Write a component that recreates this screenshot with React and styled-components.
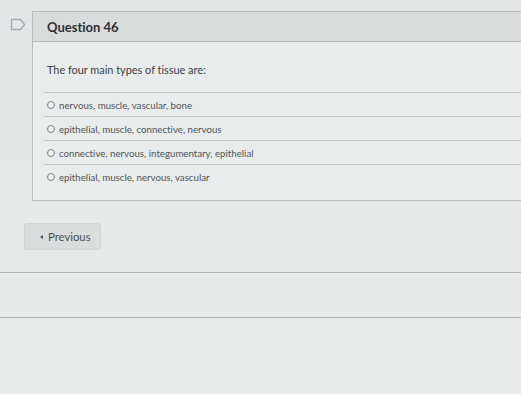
import React from 'react';
import styled, { createGlobalStyle } from 'styled-components';

const answers = [
    'nervous, muscle, vascular, bone',
    'epithelial, muscle, connective, nervous',
    'connective, nervous, integumentary, epithelial',
    'epithelial, muscle, nervous, vascular'
];

export default function App () {

    return (
        <Page>
            <GlobalStyle />
            <QuestionRow>
                <FlagCell>
                    <svg width="16" height="13" viewBox="0 0 16 13">
                        <path d="M1.5 1.5 H10.5 L14.5 6.5 L10.5 11.5 H1.5 Z" fill="none" stroke="#a4a7b6" strokeWidth="1.3" strokeLinejoin="round" />
                    </svg>
                </FlagCell>
                <Card>
                    <Header>Question 46</Header>
                    <Body>
                        <Prompt>The four main types of tissue are:</Prompt>
                        <AnswerList>
                            {
                                answers.map(a => {
                                    return (
                                        <Answer key={a}>
                                            <Radio />
                                            <span>{a}</span>
                                        </Answer>
                                    )
                                })
                            }
                        </AnswerList>
                    </Body>
                </Card>
            </QuestionRow>
            <Nav>
                <PrevButton>
                    <Arrow />
                    Previous
                </PrevButton>
            </Nav>
            <Rule />
            <Rule $gap={44} />
        </Page>
    )

}

const GlobalStyle = createGlobalStyle`
    html, body {
        margin: 0;
        background: #e5e8e8;
        overflow: hidden;
    }
    body {
        font-family: Lato, "Open Sans", sans-serif;
        font-variant-ligatures: none;
    }
`;

const Page = styled.div`
    width: 521px;
    height: 394px;
    padding-top: 11px;
    box-sizing: border-box;
    overflow: hidden;
    background: linear-gradient(180deg, #e3e6e6 0%, #e8ebeb 100%);
`;

const QuestionRow = styled.div`
    display: flex;
    width: 540px;
`;

const FlagCell = styled.div`
    width: 32px;
    display: flex;
    justify-content: flex-end;
    padding: 7px 6px 0 0;
    box-sizing: border-box;
`;

const Card = styled.div`
    flex: 1;
    border: 1px solid #b9bdbd;
    border-right: none;
    background: #e9ecec;
`;

const Header = styled.div`
    height: 29px;
    display: flex;
    align-items: center;
    padding-left: 14px;
    background: #d9dcdc;
    border-bottom: 1px solid #b3b8b8;
    color: #2d3133;
    font-size: 13px;
    font-weight: 700;
`;

const Body = styled.div`
    padding: 22px 0 12px 11px;
`;

const Prompt = styled.div`
    padding-left: 3px;
    font-size: 10.9px;
    line-height: 12px;
    color: #3c4043;
    margin-bottom: 16px;
`;

const AnswerList = styled.div`
    border-top: 1px solid #c6cbcb;
`;

const Answer = styled.div`
    height: 23px;
    display: flex;
    align-items: center;
    gap: 4px;
    padding-left: 3px;
    font-size: 9.7px;
    color: #4f5457;
    border-bottom: 1px solid #c6cbcb;

    &:last-child {
        border-bottom: none;
    }
`;

const Radio = styled.span`
    flex-shrink: 0;
    width: 6px;
    height: 6px;
    border: 1px solid #7f8588;
    border-radius: 50%;
    background: #eef0f0;
`;

const Nav = styled.div`
    padding: 22px 0 0 24px;
`;

const PrevButton = styled.div`
    width: 77px;
    height: 27px;
    box-sizing: border-box;
    display: flex;
    align-items: center;
    gap: 5px;
    padding-left: 15px;
    background: #d9dddd;
    border: 1px solid #d0d4d4;
    border-radius: 3px;
    color: #4a5055;
    font-size: 11.3px;
`;

const Arrow = styled.span`
    width: 0;
    height: 0;
    border-top: 2.5px solid transparent;
    border-bottom: 2.5px solid transparent;
    border-right: 3px solid #4a5055;
`;

const Rule = styled.div`
    margin-top: ${p => p.$gap || 22}px;
    height: 1px;
    background: #aeb3b3;
`;
